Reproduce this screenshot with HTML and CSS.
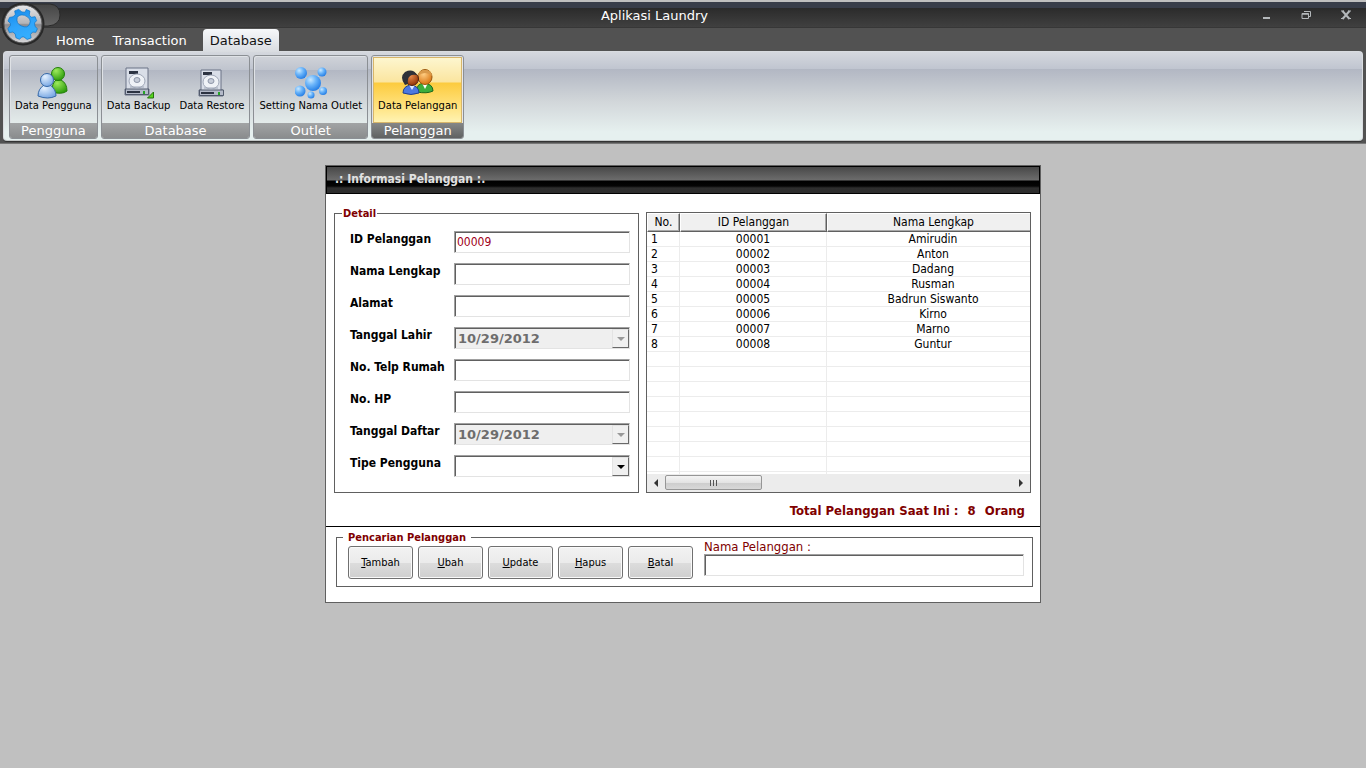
FILE: index.html
```html
<!DOCTYPE html>
<html lang="id">
<head>
<meta charset="utf-8">
<title>Aplikasi Laundry</title>
<link rel="stylesheet" href="styles.css">
</head>
<body>
<header class="app">
  <div class="titlebar">
    <h1 class="title">Aplikasi Laundry</h1>
    <div class="window-buttons">
      <button type="button" aria-label="Minimize"><svg width="12" height="12" viewBox="0 0 12 12"><path d="M3 9h7" stroke="#b4b8bb" stroke-width="2"/></svg></button>
      <button type="button" aria-label="Restore"><svg width="12" height="12" viewBox="0 0 12 12"><path d="M4 2.500h6.500v5H8.500M2 4.500h6.500v5H2z" fill="none" stroke="#b4b8bb"/><path d="M2 5h6.500" stroke="#b4b8bb" stroke-width="1.500"/></svg></button>
      <button type="button" aria-label="Close"><svg width="12" height="12" viewBox="0 0 12 12"><path d="M2.500 2l7 8M9.500 2l-7 8" stroke="#b4b8bb" stroke-width="2"/><path d="M1 2h3M8 2h3M1 9.500h3M8 9.500h3" stroke="#b4b8bb"/></svg></button>
    </div>
  </div>
  <button class="orb" type="button" aria-label="Menu">
    <svg width="64" height="48" viewBox="0 0 64 48">
      <defs>
        <linearGradient id="orbFill" x1="0" y1="0" x2="0" y2="1"><stop offset="0" stop-color="#e8e8ea"/><stop offset=".48" stop-color="#b4b4b8"/><stop offset=".52" stop-color="#8c8c90"/><stop offset="1" stop-color="#d8d8da"/></linearGradient>
        <linearGradient id="gearFill" x1="0" y1="0" x2="1" y2="1"><stop offset="0" stop-color="#1187e8"/><stop offset=".5" stop-color="#2fa4fb"/><stop offset="1" stop-color="#38b4ff"/></linearGradient>
        <linearGradient id="tabFill" x1="0" y1="0" x2="0" y2="1"><stop offset="0" stop-color="#454545"/><stop offset="1" stop-color="#666"/></linearGradient>
      </defs>
      <path d="M30 4h20q10 1 10 11t-12 11H36z" fill="url(#tabFill)" stroke="#2a2a2a"/>
      <circle cx="23" cy="24" r="21.500" fill="#292929"/>
      <circle cx="23" cy="24" r="19" fill="url(#orbFill)" stroke="#5a5a5a"/>
      <g transform="rotate(24 22 24)">
        <path fill="url(#gearFill)" stroke="#0873cb" stroke-width=".6" fill-rule="evenodd" d="M20 9h4l1 4 3 1 3-2 3 3-1 3 2 3 3 1v4l-3 1-1 3 2 3-3 3-4-1-2 1-1 3h-4l-2-3-3-1-3 2-3-3 1-4-1-2-3-1v-4l3-2 1-3-2-3 3-3 4 1 3-1zM21 15q-6 1-6 5 1 6 7 6 7 0 7-5 0-6-8-6z"/>
      </g>
    </svg>
  </button>
  <nav class="tabs">
    <button type="button">Home</button>
    <button type="button">Transaction</button>
    <button type="button" class="active">Database</button>
  </nav>
  <div class="ribbon">
    <section class="group">
      <div class="tools">
        <button type="button" class="tool">
          <svg width="32" height="32" viewBox="0 0 32 32">
            <defs>
              <radialGradient id="blueMan" cx=".35" cy=".25" r=".8"><stop offset="0" stop-color="#e4f1ff"/><stop offset="1" stop-color="#75a5e2"/></radialGradient>
              <radialGradient id="greenMan" cx=".35" cy=".25" r=".8"><stop offset="0" stop-color="#9dea5c"/><stop offset="1" stop-color="#2a9a0a"/></radialGradient>
            </defs>
            <g fill="url(#greenMan)" stroke="#237f0b"><path d="M15 24q0-8 4-11h5q6 3 6 11-5 4-15 1z"/><circle cx="21" cy="7" r="6.500"/></g>
            <g fill="url(#blueMan)" stroke="#3568a8"><path d="M1 29q0-7 6-11h6q6 4 6 11-8 4-18 0z"/><circle cx="10" cy="13" r="6.500"/></g>
          </svg>
          <span>Data Pengguna</span>
        </button>
      </div>
      <h2>Pengguna</h2>
    </section>
    <section class="group">
      <div class="tools">
        <button type="button" class="tool">
          <svg width="32" height="32" viewBox="0 0 32 32">
            <path d="M3 1h22v21h1v6H2v-6h1z" fill="#d9dee8" stroke="#6a7386"/><path d="M2.500 22h23v5.500h-23z" fill="#b4bac9" stroke="#515a6c"/>
            <path d="M6 4h9v3H6zM4 24h13v2H4z" fill="#2c3342"/><ellipse cx="14" cy="14" rx="8" ry="7" fill="#eff2f7" stroke="#a0a8b8"/><path d="M7 20h14" stroke="#a0a8b8"/><ellipse cx="14" cy="13" rx="3" ry="2.500" fill="#c6ccd8" stroke="#8d96a8"/><path d="M20 24h2v3h-2z" fill="#25a325"/>
            <path d="M30.500 25v6h-6z" fill="#56d51d" stroke="#24730b"/>
          </svg>
          <span>Data Backup</span>
        </button>
        <button type="button" class="tool">
          <svg width="32" height="32" viewBox="0 0 32 32">
            <path d="M5 3h20v20h2v6H3v-6h2z" fill="#d9dee8" stroke="#6a7386"/><path d="M3.500 23h24v5.500h-24z" fill="#b4bac9" stroke="#515a6c"/>
            <path d="M7 5h9v3H7zM5 25h13v2H5z" fill="#2c3342"/><ellipse cx="15" cy="15" rx="8" ry="7" fill="#eff2f7" stroke="#a0a8b8"/><path d="M8 21h14" stroke="#a0a8b8"/><ellipse cx="15" cy="14" rx="3" ry="2.500" fill="#c6ccd8" stroke="#8d96a8"/><path d="M22 25h2v3h-2z" fill="#25a325"/>
          </svg>
          <span>Data Restore</span>
        </button>
      </div>
      <h2>Database</h2>
    </section>
    <section class="group">
      <div class="tools">
        <button type="button" class="tool">
          <svg width="32" height="32" viewBox="0 0 32 32">
            <defs><radialGradient id="bubble" cx=".35" cy=".3" r=".75"><stop offset="0" stop-color="#c8e8ff"/><stop offset=".45" stop-color="#6bb5fa"/><stop offset="1" stop-color="#217be4"/></radialGradient></defs>
            <path d="M5 6l13 10L27 5M4 24l14-8 9 9M18 16l-2 12" stroke="#b5d8f5" fill="none"/>
            <g fill="url(#bubble)"><circle cx="6" cy="6" r="6"/><circle cx="27" cy="5" r="4.500"/><circle cx="18" cy="16" r="8"/><circle cx="5" cy="24" r="5.500"/><circle cx="28" cy="24" r="4"/><circle cx="16" cy="28" r="3.500"/></g>
          </svg>
          <span>Setting Nama Outlet</span>
        </button>
      </div>
      <h2>Outlet</h2>
    </section>
    <section class="group current">
      <div class="tools">
        <button type="button" class="tool">
          <svg width="32" height="32" viewBox="0 0 32 32">
            <defs>
              <radialGradient id="faceA" cx=".4" cy=".3" r=".7"><stop offset="0" stop-color="#e88a4a"/><stop offset="1" stop-color="#913406"/></radialGradient>
              <radialGradient id="faceB" cx=".4" cy=".3" r=".7"><stop offset="0" stop-color="#ffcf85"/><stop offset="1" stop-color="#d97512"/></radialGradient>
            </defs>
            <path d="M15 24q-1-7 7-8 9 1 9 8-6 3-16 1z" fill="#3cad3c" stroke="#17661c"/><path d="M20 16l3 6 3-6z" fill="#fff"/>
            <ellipse cx="23" cy="10" rx="7" ry="7.500" fill="url(#faceB)" stroke="#9a570e"/><path d="M16 9q0-6 7-6t7 6q-3-3-7-3t-7 3z" fill="#d99a4b"/>
            <path d="M1 26q0-7 8-8 8 1 8 8-8 3-16 0z" fill="#4c78e0" stroke="#22418f"/><path d="M7 18l3 5 3-5z" fill="#dbe9ff"/>
            <circle cx="10" cy="12" r="6.500" fill="url(#faceA)" stroke="#4b2112"/><path d="M3 18q-6-8 0-13 8-4 12 3-5-1-7 1-3 2-2 8z" fill="#2f3138"/>
          </svg>
          <span>Data Pelanggan</span>
        </button>
      </div>
      <h2>Pelanggan</h2>
    </section>
  </div>
</header>

<main class="workspace">
  <form class="dialog">
    <h2 class="dialog-title">.: Informasi Pelanggan :.</h2>
    <div class="columns">
      <fieldset class="detail">
        <legend>Detail</legend>
        <div class="field"><label for="id">ID Pelanggan</label><input id="id" type="text" value="00009"></div>
        <div class="field"><label for="nama">Nama Lengkap</label><input id="nama" type="text"></div>
        <div class="field"><label for="alamat">Alamat</label><input id="alamat" type="text"></div>
        <div class="field"><label for="lahir">Tanggal Lahir</label><div class="combo"><select id="lahir" disabled><option>10/29/2012</option></select><span class="drop"></span></div></div>
        <div class="field"><label for="telp">No. Telp Rumah</label><input id="telp" type="text"></div>
        <div class="field"><label for="hp">No. HP</label><input id="hp" type="text"></div>
        <div class="field"><label for="daftar">Tanggal Daftar</label><div class="combo"><select id="daftar" disabled><option>10/29/2012</option></select><span class="drop"></span></div></div>
        <div class="field"><label for="tipe">Tipe Pengguna</label><div class="combo"><select id="tipe"><option></option></select><span class="drop"></span></div></div>
      </fieldset>
      <div class="list">
        <div class="list-view">
          <table>
            <colgroup><col class="col-no"><col class="col-id"><col></colgroup>
            <thead><tr><th>No.</th><th>ID Pelanggan</th><th>Nama Lengkap</th></tr></thead>
            <tbody>
              <tr><td>1</td><td>00001</td><td>Amirudin</td></tr>
              <tr><td>2</td><td>00002</td><td>Anton</td></tr>
              <tr><td>3</td><td>00003</td><td>Dadang</td></tr>
              <tr><td>4</td><td>00004</td><td>Rusman</td></tr>
              <tr><td>5</td><td>00005</td><td>Badrun Siswanto</td></tr>
              <tr><td>6</td><td>00006</td><td>Kirno</td></tr>
              <tr><td>7</td><td>00007</td><td>Marno</td></tr>
              <tr><td>8</td><td>00008</td><td>Guntur</td></tr>
              <tr><td></td><td></td><td></td></tr>
              <tr><td></td><td></td><td></td></tr>
              <tr><td></td><td></td><td></td></tr>
              <tr><td></td><td></td><td></td></tr>
              <tr><td></td><td></td><td></td></tr>
              <tr><td></td><td></td><td></td></tr>
              <tr><td></td><td></td><td></td></tr>
              <tr><td></td><td></td><td></td></tr>
              <tr><td></td><td></td><td></td></tr>
            </tbody>
          </table>
        </div>
        <div class="scrollbar">
          <button type="button" aria-label="Scroll left"><svg width="4" height="8" viewBox="0 0 4 8"><path d="M4 0v8L0 4z" fill="#333"/></svg></button>
          <div class="track"><div class="thumb"><svg width="9" height="6" viewBox="0 0 9 6"><path d="M1.500 0v6M4.500 0v6M7.500 0v6" stroke="#555"/></svg></div></div>
          <button type="button" aria-label="Scroll right"><svg width="4" height="8" viewBox="0 0 4 8"><path d="M0 0v8l4-4z" fill="#333"/></svg></button>
        </div>
      </div>
    </div>
    <p class="total"><span>Total Pelanggan Saat Ini :</span><span>8</span><span>Orang</span></p>
    <div class="footer">
      <fieldset class="search">
        <legend>Pencarian Pelanggan</legend>
        <div class="search-row">
          <div class="actions">
            <button type="button"><u>T</u>ambah</button>
            <button type="button"><u>U</u>bah</button>
            <button type="button"><u>U</u>pdate</button>
            <button type="button"><u>H</u>apus</button>
            <button type="button"><u>B</u>atal</button>
          </div>
          <div class="query"><label for="cari">Nama Pelanggan :</label><input id="cari" type="text"></div>
        </div>
      </fieldset>
    </div>
  </form>
</main>
</body>
</html>
```
FILE: styles.css
```css
* { box-sizing: border-box; }
body {
  margin: 0;
  background: #c0c0c0;
  color: #000;
  font: 12px/15px "DejaVu Sans Condensed", "DejaVu Sans", sans-serif;
}
h1, h2, p, fieldset { margin: 0; }
button, input, select { font: inherit; color: inherit; margin: 0; padding: 0; }
svg { display: block; }

/* Application frame */
.app {
  position: relative;
  border-top: 2px solid #c0c0c0;
  padding: 0 3px 2px;
  background: #525252;
  border-bottom: 1px solid #777;
  font-family: "DejaVu Sans", sans-serif;
}
.titlebar {
  display: grid;
  grid-template-columns: 1fr auto 1fr;
  align-items: center;
  height: 26px;
  margin: 0 -3px;
  background: linear-gradient(#393e4a 0 6px, #2b2b2b 6px, #404040 25px, #373737 25px);
}
.title { grid-column: 2; margin-right: 57px; font-size: 13px; font-weight: 400; color: #fff; }
.window-buttons { display: flex; justify-content: flex-end; gap: 28px; padding-right: 14px; }
.window-buttons button { border: 0; background: none; }
.orb { position: absolute; left: 0; top: -2px; border: 0; background: none; }
.tabs { display: flex; align-items: flex-end; height: 23px; padding-left: 44px; }
.tabs button {
  height: 22px;
  padding: 0 9px;
  border: 0;
  border-radius: 4px 4px 0 0;
  background: none;
  color: #fff;
  font-size: 13px;
}
.tabs .active {
  margin-left: 7px;
  padding: 0 7px;
  background: linear-gradient(#f6f8fa, #dadde2);
  color: #111;
}
.ribbon {
  display: flex;
  gap: 3px;
  height: 90px;
  padding: 3px 5px 1px;
  border: 1px solid #d9dce0;
  border-bottom-color: #c4c8c8;
  border-radius: 4px;
  background: linear-gradient(#d5d8de, #c0c5d0 17px, #b2b7c3 17px, #d2d7da 50px, #e6f0ef 80px);
  box-shadow: 0 1px #333;
}
.group {
  display: flex;
  flex-direction: column;
  border: 1px solid #8b8f94;
  border-radius: 3px;
  background: linear-gradient(#d0d3d9, #bfc4ce 14px, #b2b7c3 14px, #d2d7da 45px, #e4eceb 68px);
  box-shadow: inset 1px 1px #dfe2e6;
  overflow: hidden;
}
.tools { display: flex; flex: 1; gap: 1px; padding: 0 1px; }
.tool {
  display: flex;
  flex-direction: column;
  align-items: center;
  flex: 1;
  padding: 11px 4px 0;
  border: 0;
  background: none;
  font-size: 10px;
  line-height: 14px;
  white-space: nowrap;
}
.group h2 {
  height: 15px;
  background: linear-gradient(#a2a4a5, #8a8c8d);
  color: #fff;
  font-size: 13px;
  line-height: 15px;
  font-weight: 400;
  text-align: center;
}
.current { background: #e8e8e8; }
.current .tools { padding: 1px 1px 0; }
.current .tool {
  padding: 9px 4px 0;
  border: 1px solid #d8b66a;
  background: linear-gradient(#fdf6cf, #fbe59f 24px, #fccb3e 25px, #ffe27e 48px, #fff3b2);
}
.current h2 { background: linear-gradient(#858787, #606262); }

/* Customer dialog */
.workspace { display: flex; justify-content: center; padding: 21px 16px; }
.dialog { width: 716px; border: 1px solid #606060; background: #fff; }
.dialog-title {
  height: 28px;
  padding: 0 8px;
  border: 1px solid #000;
  background: linear-gradient(#484848, #6c6c6c 13px, #000 14px, #050505 19px, #2e2e2e 21px, #2c2c2c);
  color: #e2e2e2;
  font-size: 12px;
  line-height: 24px;
  font-weight: 700;
}
.columns { display: flex; align-items: stretch; gap: 7px; padding: 12px 9px 0 8px; }
fieldset { min-width: 0; border: 1px solid #606060; padding: 0; }
legend { color: #800000; font-size: 11px; font-weight: 700; padding: 0 1px; }
.detail { flex: 0 0 305px; padding: 0 8px 15px 15px; }
.detail legend { margin-left: -8px; }
.field { display: grid; grid-template-columns: 104px 1fr; height: 32px; padding-top: 10px; }
.field label { font-weight: 700; line-height: 17px; white-space: nowrap; }
input, select {
  width: 100%;
  height: 22px;
  border: 1px solid;
  border-color: #a0a0a0 #e3e3e3 #e3e3e3 #a0a0a0;
  border-radius: 0;
  background: #fff;
  box-shadow: inset 1px 1px #606060;
  outline: 0;
}
input { padding: 0 2px; }
#id { color: #a00020; }
.combo { position: relative; height: 22px; }
select { appearance: none; padding: 1px 3px 0; opacity: 1; }
select:disabled {
  background: #efefef;
  color: #6d6d6d;
  font: 700 13px/18px "DejaVu Sans", sans-serif;
}
.drop {
  position: absolute;
  top: 2px;
  right: 1px;
  display: grid;
  place-items: center;
  width: 17px;
  height: 19px;
  border: 1px solid;
  border-color: #e3e3e3 #696969 #696969 #e3e3e3;
  background: #f0f0f0;
  pointer-events: none;
}
.drop::after { content: ""; border: 4px solid transparent; border-top-color: #000; border-bottom: 0; }
select:disabled + .drop::after { border-top-color: #999; }

/* Customer list */
.list { display: flex; flex-direction: column; flex: 1; min-width: 0; margin-top: 6px; border: 1px solid #606060; }
.list-view { flex: 1 1 0; min-height: 0; overflow: hidden; }
table { width: calc(100% + 10px); border-collapse: separate; border-spacing: 0; table-layout: fixed; }
.col-no { width: 33px; }
.col-id { width: 147px; }
th {
  height: 19px;
  padding: 0;
  border: 1px solid;
  border-color: #fff #606060 #606060 #fff;
  background: #f0f0f0;
  box-shadow: inset -1px -1px #a8a8a8;
  font-weight: 400;
}
td {
  height: 15px;
  padding: 0;
  border: solid #ececec;
  border-width: 0 1px 1px 0;
  line-height: 14px;
  text-align: center;
}
td:first-child { padding-left: 4px; text-align: left; }
.scrollbar { display: flex; height: 18px; background: #ececec; }
.scrollbar button { display: grid; place-items: center; width: 18px; border: 0; background: none; }
.track { flex: 1; }
.thumb {
  display: grid;
  place-items: center;
  width: 97px;
  height: 15px;
  margin-top: 1px;
  border: 1px solid #969696;
  border-radius: 2px;
  background: linear-gradient(#f4f4f4, #e2e2e2 7px, #cdcdcd 7px, #d8d8d8);
}
.total {
  display: flex;
  justify-content: flex-end;
  gap: 9px;
  padding: 10px 15px 8px;
  color: #800000;
  font-size: 13px;
  font-weight: 700;
}

/* Search and actions */
.footer { border-top: 1px solid #000; padding: 3px 7px 15px 10px; }
.search { padding: 0 8px 7px 11px; }
.search legend { margin-left: -5px; padding: 0 5px; }
.search-row { display: flex; gap: 11px; }
.actions { display: flex; gap: 5px; padding-top: 1px; }
.actions button {
  width: 65px;
  height: 33px;
  border: 1px solid #707070;
  border-radius: 3px;
  background: linear-gradient(#f2f2f2, #ebebeb 50%, #dddddd 50%, #cfcfcf);
  box-shadow: inset 0 0 0 1px #fafafa;
  font-size: 11px;
}
.query { display: flex; flex: 1; flex-direction: column; margin-top: -6px; color: #800000; font-size: 13px; }
```
